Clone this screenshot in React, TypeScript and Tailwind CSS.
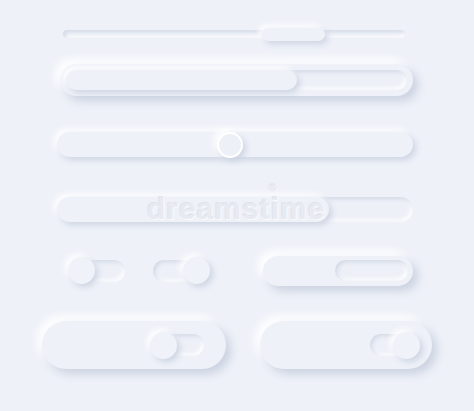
import React from 'react';

// soft "neumorphic" shadows
const raised = 'shadow-[3px_3px_6px_#cdd4e2,-3px_-3px_6px_#ffffff]';
const raisedBig = 'shadow-[5px_5px_10px_#cbd2e0,-5px_-5px_10px_#ffffff]';
const inset = 'shadow-[inset_2px_2px_4px_#d3d9e6,inset_-2px_-2px_4px_#ffffff]';

function Knob({ size = 'w-[27px] h-[27px]' }: { size?: string }) {
  return <div className={`${size} rounded-full bg-[#eff2f8] ${raised} shrink-0`} />;
}

function Toggle({ on, width }: { on?: boolean; width: string }) {
  return (
    <div className={`relative ${width} h-[27px] flex items-center`}>
      <div className={`w-full h-[22px] rounded-full bg-[#edf0f7] ${inset}`} />
      <div className={`absolute top-0 ${on ? 'right-0' : 'left-0'}`}>
        <Knob />
      </div>
    </div>
  );
}

export default function App() {
  return (
    <div className="w-[474px] h-[411px] bg-[#eef1f8] pt-[28px] flex flex-col overflow-hidden font-['Liberation_Sans',sans-serif]">
      {/* thin slider with pill thumb */}
      <div className="relative ml-[63px] w-[342px] h-[13px]">
        <div className={`mt-[2px] h-[8px] rounded-full bg-[#edf0f7] ${inset}`} />
        <div className={`absolute left-[199px] top-0 w-[63px] h-[13px] rounded-full bg-[#eef1f8] ${raised}`} />
      </div>

      {/* progress inside raised frame */}
      <div className={`mt-[23px] ml-[60px] w-[353px] h-[32px] p-[6px] rounded-full bg-[#eef1f8] ${raisedBig}`}>
        <div className={`h-[20px] rounded-full bg-[#edf0f7] ${inset}`}>
          <div className={`w-[231px] h-[20px] rounded-full bg-[#eef1f8] ${raised}`} />
        </div>
      </div>

      {/* slider with round knob */}
      <div className="relative mt-[36px] ml-[57px] w-[356px] h-[26px]">
        <div className={`h-[25px] rounded-full bg-[#eef1f8] ${raised}`} />
        <div className="absolute left-[160px] top-0">
          <div className={`w-[26px] h-[26px] rounded-full bg-[#edf0f7] border-2 border-white ${raised}`} />
        </div>
      </div>

      {/* filled bar, with the faint stamp laid over it */}
      <div className={`relative mt-[39px] ml-[57px] w-[356px] h-[25px] rounded-full bg-[#edf0f7] ${inset}`}>
        <div className={`w-[272px] h-[25px] rounded-full bg-[#eef1f8] ${raised}`} />
        <div className="absolute left-[90px] top-[-3px] text-[30px] leading-none font-bold tracking-[1px] text-[#e7eaf1] [text-shadow:1px_1px_0_#f9fafd,-1px_-1px_0_#dfe3eb]">
          dreamstime
        </div>
        <div className="absolute left-[211px] top-[-15px] text-[11px] leading-none text-[#dfe3eb]">®</div>
      </div>

      {/* small toggles and slide pill */}
      <div className="mt-[33px] flex items-center h-[31px]">
        <div className="ml-[68px]">
          <Toggle width="w-[57px]" />
        </div>
        <div className="ml-[28px]">
          <Toggle on width="w-[57px]" />
        </div>
        <div className={`ml-[53px] w-[150px] h-[30px] rounded-full bg-[#eef1f8] ${raisedBig} flex items-center justify-end pr-[5px]`}>
          <div className={`w-[73px] h-[21px] rounded-full bg-[#edf0f7] ${inset}`} />
        </div>
      </div>

      {/* large framed toggles */}
      <div className="mt-[35px] flex items-center">
        <div className={`ml-[42px] w-[184px] h-[48px] rounded-full bg-[#eef1f8] ${raisedBig} flex items-center justify-end pr-[22px]`}>
          <Toggle width="w-[54px]" />
        </div>
        <div className={`ml-[34px] w-[172px] h-[48px] rounded-full bg-[#eef1f8] ${raisedBig} flex items-center justify-end pr-[12px]`}>
          <Toggle on width="w-[50px]" />
        </div>
      </div>
    </div>
  );
}
